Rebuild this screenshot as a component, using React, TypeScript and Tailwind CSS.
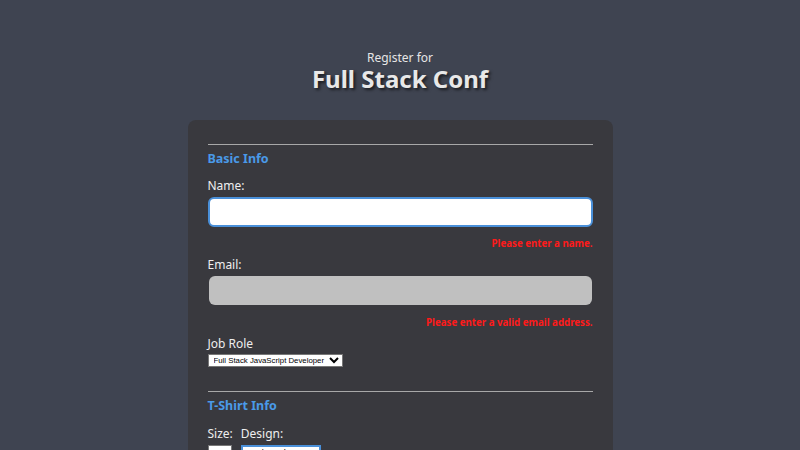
export default function App() {
  return (
    <div className="min-h-[450px] w-full bg-[#3f4451] font-['Noto_Sans',sans-serif] text-[#eeeeee]">
      <header className="pt-[51px] text-center">
        <p className="text-[12px] leading-[14px] text-[#e6e6e6]">Register for</p>
        <h1 className="text-[24px] font-bold leading-[28px] text-[#e8e8e8] [text-shadow:2px_2px_3px_rgba(0,0,0,0.6)]">
          Full Stack Conf
        </h1>
      </header>

      <form className="mx-auto mt-[27px] w-[425px] rounded-[8px] bg-[#39393e] px-[20px] pt-[24px] pb-[20px]">
        <fieldset>
          <hr className="border-t border-[#a8a8a8]" />
          <h2 className="mt-[5px] text-[12.5px] font-bold leading-[18px] text-[#4a9ae8]">Basic Info</h2>

          <label className="mt-[10px] block text-[12px] leading-[16px]">Name:</label>
          <input
            type="text"
            className="mt-[3px] block h-[30px] w-full rounded-[6px] border-2 border-[#4a90d9] bg-white outline-none"
          />
          <p className="mt-[10px] text-right text-[9.7px] font-bold leading-[14px] text-[#ff1a1a]">Please enter a name.</p>

          <label className="mt-[6px] block text-[12px] leading-[16px]">Email:</label>
          <input
            type="email"
            className="mx-[1px] mt-[3px] block h-[29px] w-[calc(100%-2px)] rounded-[6px] border-0 bg-[#c0c0c0] outline-none"
          />
          <p className="mt-[11px] text-right text-[9.7px] font-bold leading-[14px] text-[#ff1a1a]">
            Please enter a valid email address.
          </p>

          <label className="mt-[6px] block text-[12px] leading-[16px]">Job Role</label>
          <select className="mt-[2px] block h-[13px] border border-[#777] bg-white px-[1px] font-['Liberation_Sans',sans-serif] text-[7.8px] leading-[10px] text-black">
            <option>Full Stack JavaScript Developer</option>
          </select>
        </fieldset>

        <fieldset className="mt-[24px]">
          <hr className="border-t border-[#a8a8a8]" />
          <h2 className="mt-[5px] text-[12.5px] font-bold leading-[18px] text-[#4a9ae8]">T-Shirt Info</h2>
          <div className="mt-[11px] flex gap-[8px]">
            <div>
              <label className="block text-[12px] leading-[16px]">Size:</label>
              <select className="mt-[3px] block h-[16px] w-[24px] border border-[#777] bg-white px-[2px] py-0 font-['Liberation_Sans',sans-serif] text-[9px] leading-[12px] text-black">
                <option>S</option>
              </select>
            </div>
            <div>
              <label className="block text-[12px] leading-[16px]">Design:</label>
              <select className="mt-[3px] block h-[16px] w-[80px] border-2 border-[#4a90d9] bg-white px-[4px] py-0 font-['Liberation_Sans',sans-serif] text-[9px] leading-[12px] text-black">
                <option>Select Theme</option>
              </select>
            </div>
          </div>
        </fieldset>
      </form>
    </div>
  )
}
